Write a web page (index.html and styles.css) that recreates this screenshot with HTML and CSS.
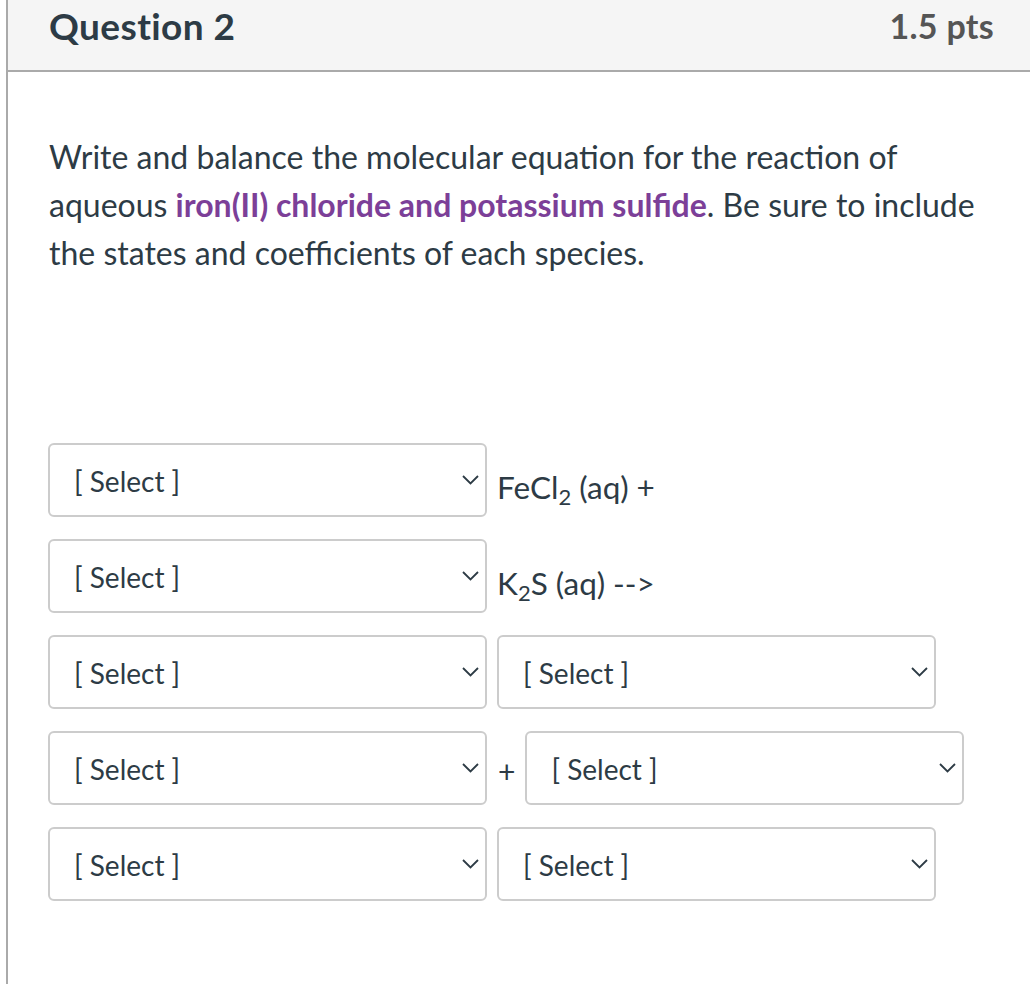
FILE: index.html
```html
<!DOCTYPE html>
<html>
<head>
<meta charset="utf-8">
<link rel="stylesheet" href="styles.css">
</head>
<body>
<div class="question">
  <div class="header">
    <span class="title">Question 2</span>
    <span class="pts">1.5 pts</span>
  </div>
  <div class="body">
    <p class="prompt">Write and balance the molecular equation for the reaction of aqueous <strong class="hl">iron(II) chloride and potassium sulfide</strong>. Be sure to include the states and coefficients of each species.</p>
    <div class="equation">
      <div class="row">
        <div class="select"><span>[ Select ]</span><svg class="chev" width="17" height="10" viewBox="0 0 17 10"><path d="M1 1 L8.5 8.5 L16 1" fill="none" stroke="#2d3b45" stroke-width="1.8"/></svg></div>
        <span class="label">FeCl<sub>2</sub> (aq) +</span>
      </div>
      <div class="row">
        <div class="select"><span>[ Select ]</span><svg class="chev" width="17" height="10" viewBox="0 0 17 10"><path d="M1 1 L8.5 8.5 L16 1" fill="none" stroke="#2d3b45" stroke-width="1.8"/></svg></div>
        <span class="label">K<sub>2</sub>S (aq) --&gt;</span>
      </div>
      <div class="row">
        <div class="select"><span>[ Select ]</span><svg class="chev" width="17" height="10" viewBox="0 0 17 10"><path d="M1 1 L8.5 8.5 L16 1" fill="none" stroke="#2d3b45" stroke-width="1.8"/></svg></div>
        <div class="select"><span>[ Select ]</span><svg class="chev" width="17" height="10" viewBox="0 0 17 10"><path d="M1 1 L8.5 8.5 L16 1" fill="none" stroke="#2d3b45" stroke-width="1.8"/></svg></div>
      </div>
      <div class="row">
        <div class="select"><span>[ Select ]</span><svg class="chev" width="17" height="10" viewBox="0 0 17 10"><path d="M1 1 L8.5 8.5 L16 1" fill="none" stroke="#2d3b45" stroke-width="1.8"/></svg></div>
        <span class="plus">+</span>
        <div class="select"><span>[ Select ]</span><svg class="chev" width="17" height="10" viewBox="0 0 17 10"><path d="M1 1 L8.5 8.5 L16 1" fill="none" stroke="#2d3b45" stroke-width="1.8"/></svg></div>
      </div>
      <div class="row">
        <div class="select"><span>[ Select ]</span><svg class="chev" width="17" height="10" viewBox="0 0 17 10"><path d="M1 1 L8.5 8.5 L16 1" fill="none" stroke="#2d3b45" stroke-width="1.8"/></svg></div>
        <div class="select"><span>[ Select ]</span><svg class="chev" width="17" height="10" viewBox="0 0 17 10"><path d="M1 1 L8.5 8.5 L16 1" fill="none" stroke="#2d3b45" stroke-width="1.8"/></svg></div>
      </div>
    </div>
  </div>
</div>
</body>
</html>
```
FILE: styles.css
```css
html, body {
  margin: 0;
  padding: 0;
  background: #fff;
}
body {
  font-family: Lato, "Open Sans", sans-serif;
  color: #2d3b45;
}
.question {
  margin-left: 6px;
  border-left: 2px solid #aaaaaa;
  min-height: 984px;
  box-sizing: border-box;
}
.header {
  background: #f5f5f5;
  border-bottom: 2px solid #aaaaaa;
  height: 72px;
  box-sizing: border-box;
  display: flex;
  justify-content: space-between;
  align-items: center;
  padding: 0 36px 20px 41px;
}
.title {
  font-weight: 700;
  font-size: 37px;
  letter-spacing: 0.4px;
  color: #2d3b45;
}
.pts {
  font-weight: 700;
  font-size: 34px;
  letter-spacing: 0.3px;
  color: #555555;
}
.body {
  padding: 0 40px 0 40px;
}
.prompt {
  margin: 61px 0 0 1px;
  font-size: 32px;
  line-height: 48px;
}
.hl {
  color: #7c3f98;
  font-weight: 700;
}
.equation {
  margin-top: 166px;
  display: flex;
  flex-direction: column;
  gap: 22px;
}
.row {
  display: flex;
  align-items: center;
  gap: 10px;
}
.select {
  width: 439px;
  height: 74px;
  box-sizing: border-box;
  border: 2px solid #cccccc;
  border-radius: 6px;
  display: flex;
  align-items: center;
  justify-content: space-between;
  padding: 0 6px 0 24px;
  font-size: 28px;
  background: #fff;
}
.select span {
  margin-top: 1px;
}
.label {
  font-size: 31.5px;
  margin-top: 14px;
}
.label sub {
  font-size: 22px;
  vertical-align: -6px;
  line-height: 0;
}
.plus {
  font-size: 30px;
  margin-top: 6px;
  margin-left: 1px;
}
```
